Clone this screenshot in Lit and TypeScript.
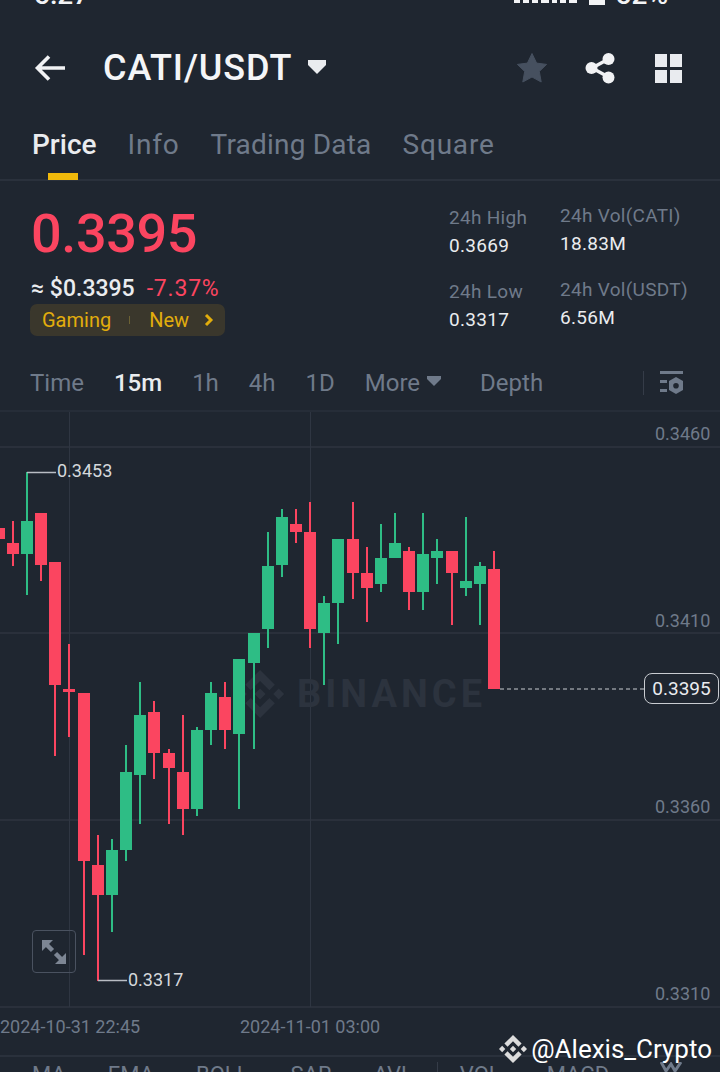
import { LitElement, css, html, svg } from 'lit';
import { customElement } from 'lit/decorators.js';

// x center, wick top, body top, body bottom, wick bottom, up
type Candle = [number, number, number, number, number, boolean];

const CHART_TOP = 412;

const candles: Candle[] = [
  [-1, 528, 528, 539, 539, false],
  [13, 521, 543, 554, 566, false],
  [27, 472, 521, 554, 595, true],
  [41, 513, 513, 565, 581, false],
  [55, 562, 562, 685, 756, false],
  [69, 644, 689, 692, 737, false],
  [84, 693, 693, 861, 955, false],
  [98, 835, 865, 895, 981, false],
  [112, 839, 850, 895, 932, true],
  [126, 745, 772, 850, 861, true],
  [140, 682, 715, 775, 824, true],
  [154, 701, 712, 753, 779, false],
  [169, 749, 753, 768, 824, false],
  [183, 715, 772, 809, 835, false],
  [197, 727, 730, 809, 816, true],
  [211, 682, 693, 730, 745, true],
  [225, 682, 697, 730, 749, false],
  [239, 659, 659, 734, 809, true],
  [254, 633, 633, 663, 749, true],
  [268, 532, 566, 629, 648, true],
  [282, 509, 517, 565, 577, true],
  [296, 509, 524, 532, 543, false],
  [310, 502, 532, 629, 648, false],
  [324, 596, 603, 633, 685, true],
  [338, 539, 539, 603, 644, true],
  [353, 502, 539, 573, 599, false],
  [367, 547, 573, 588, 622, false],
  [381, 524, 558, 584, 592, true],
  [395, 513, 543, 558, 558, true],
  [409, 547, 551, 592, 610, false],
  [423, 513, 554, 592, 610, true],
  [437, 539, 551, 558, 584, true],
  [452, 551, 551, 573, 625, false],
  [466, 517, 581, 588, 596, true],
  [480, 562, 566, 584, 625, true],
  [494, 551, 569, 689, 689, false],
];

const gridY = [447, 633, 820, 1007];
const gridX = [69.5, 310.5];
const axis: [string, number][] = [
  ['0.3460', 434],
  ['0.3410', 621],
  ['0.3360', 807],
  ['0.3310', 994],
];

const LOGO =
  'M38.73 53.2l24.59-24.58 24.6 24.6 14.3-14.31L63.32 0 24.42 38.9zM0 63.31l14.3-14.31 14.31 14.31-14.31 14.3zM38.73 73.41l24.59 24.59 24.6-24.6 14.31 14.29-38.9 38.91-38.91-38.88-.02-.02zM98 63.31l14.3-14.31 14.31 14.3-14.31 14.32zM77.83 63.3L63.32 48.78 52.59 59.51l-1.24 1.23-2.54 2.54 14.51 14.5 14.51-14.47z';

const y = (v: number) => v - CHART_TOP;

@customElement('app-root')
export class AppRoot extends LitElement {
  static styles = css`
    :host {
      display: block;
      width: 720px;
      height: 1072px;
      overflow: hidden;
      position: relative;
      background: #1f2630;
      color: #eaecef;
      font-family: 'Roboto', 'Noto Sans', sans-serif;
    }

    .status {
      height: 5px;
      overflow: hidden;
      display: flex;
      justify-content: space-between;
      padding: 0 52px 0 34px;
      font-size: 28px;
      font-weight: 500;
      line-height: 5px;
      color: #f2f3f5;
    }

    .status-text {
      transform: translateY(-8px);
    }

    .status-right {
      display: flex;
      gap: 10px;
    }

    .status-icons {
      display: block;
    }

    .header {
      height: 64px;
      margin-top: 31px;
      padding: 0 36px 0 34px;
      display: flex;
      align-items: center;
    }

    .back {
      width: 32px;
      height: 32px;
      margin-right: 37px;
    }

    .pair {
      font-size: 36px;
      font-weight: 500;
      letter-spacing: 0.9px;
      color: #f4f5f7;
    }

    .caret {
      width: 20px;
      height: 14px;
      margin: 0 0 3px 15px;
    }

    .actions {
      margin-left: auto;
      display: flex;
      align-items: center;
      gap: 36px;
    }

    .actions svg {
      width: 32px;
      height: 32px;
      display: block;
    }

    .tabs {
      height: 81px;
      box-sizing: border-box;
      border-bottom: 2px solid #2a313c;
      padding: 0 32px;
      display: flex;
      gap: 31px;
      font-size: 28px;
      letter-spacing: 0.2px;
      color: #6f7a8a;
      line-height: 89px;
    }

    .tab.active {
      position: relative;
      color: #eaecef;
      font-weight: 500;
      letter-spacing: 0;
    }

    .tab.active::after {
      content: '';
      position: absolute;
      left: 16px;
      bottom: -1px;
      width: 30px;
      height: 7px;
      background: #f0b90b;
    }

    .tab.wide {
      letter-spacing: 0.8px;
    }

    .summary {
      height: 175px;
      display: flex;
      padding: 0 32px 0 31px;
    }

    .left {
      width: 418px;
    }

    .price {
      font-size: 54px;
      font-weight: 500;
      letter-spacing: -0.4px;
      line-height: 60px;
      color: #fb4560;
      margin-top: 23px;
    }

    .sub {
      font-size: 23px;
      line-height: 30px;
      margin-top: 10px;
      display: flex;
      gap: 12px;
    }

    .sub b {
      font-weight: 500;
    }

    .change {
      color: #fb4560;
      letter-spacing: 0.8px;
    }

    .tags {
      width: 195px;
      height: 32px;
      margin-left: -1px;
      box-sizing: border-box;
      border-radius: 7px;
      background: #3a372c;
      color: #e2ad0c;
      font-size: 20px;
      display: flex;
      align-items: center;
      padding: 0 11px 0 12px;
    }

    .tag-sep {
      width: 1px;
      height: 8px;
      background: #6c6234;
      margin: 0 19px 0 18px;
    }

    .tag-arrow {
      width: 10px;
      height: 12px;
      margin-left: 15px;
    }

    .stats {
      display: grid;
      grid-template-columns: 111px auto;
      grid-auto-rows: 74px;
      padding-top: 24px;
      font-size: 19px;
      letter-spacing: 0.3px;
    }

    .stat span {
      display: block;
      color: #6f7a8a;
      line-height: 26px;
    }

    .stat strong {
      display: block;
      font-weight: 400;
      color: #eaecef;
      font-size: 19px;
      line-height: 30px;
    }

    .stat.up {
      margin-top: -2px;
    }

    .times {
      height: 56px;
      box-sizing: border-box;
      border-bottom: 2px solid #262d38;
      padding: 0 36px 0 30px;
      display: flex;
      align-items: center;
      font-size: 24px;
      color: #6f7a8a;
    }

    .times span {
      margin-right: 30px;
    }

    .times .active {
      color: #eaecef;
      font-weight: 500;
    }

    .times .more {
      margin-right: 7px;
    }

    .more-caret {
      width: 14px;
      height: 10px;
      margin: 0 39px 4px 0;
    }

    .times .depth {
      margin-right: 0;
    }

    .times-sep {
      width: 1px;
      height: 24px;
      background: #353c48;
      margin-left: auto;
      margin-right: 16px;
    }

    .settings {
      width: 24px;
      height: 24px;
    }

    .chart {
      position: relative;
      height: 643px;
      border-bottom: 2px solid #2a313c;
    }

    .chart svg {
      display: block;
    }

    .chart text {
      font-family: 'Roboto', 'Noto Sans', sans-serif;
    }

    .current {
      position: absolute;
      right: 1px;
      top: 261px;
      width: 75px;
      height: 31px;
      box-sizing: border-box;
      border: 1.5px solid #c9ccd1;
      border-radius: 8px;
      background: #1f2630;
      color: #eaecef;
      font-size: 19px;
      line-height: 29px;
      text-align: center;
    }

    .expand {
      position: absolute;
      left: 32px;
      top: 518px;
      width: 44px;
      height: 43px;
      box-sizing: border-box;
      border: 1.5px solid #4a5260;
      border-radius: 4px;
      display: flex;
      align-items: center;
      justify-content: center;
    }

    .indicators {
      display: flex;
      padding: 5px 38px 0 32px;
      font-size: 22px;
      color: #6f7a8a;
    }

    .ind-group {
      display: flex;
      gap: 42px;
    }

    .ind-group.right {
      gap: 46px;
    }

    .ind-sep {
      width: 1px;
      height: 20px;
      background: #353c48;
      margin: 0 22px 0 24px;
    }

    .ind-more {
      display: block;
      margin-left: auto;
    }

    .watermark {
      position: absolute;
      right: 8px;
      top: 1034px;
      display: flex;
      align-items: center;
      gap: 4px;
      font-size: 26px;
      color: #fff;
    }

    .watermark svg {
      color: #dcdcdc;
    }
  `;

  render() {
    return html`
      <div class="status">
        <div class="status-text">5:27</div>
        <div class="status-right">
          <svg class="status-icons" width="92" height="5" viewBox="0 0 92 5" fill="#f2f3f5">
            <rect x="0" y="0" width="6" height="3" />
            <rect x="9" y="0" width="6" height="3" />
            <rect x="18" y="0" width="6" height="3" />
            <rect x="27" y="0" width="8" height="3" />
            <rect x="38" y="0" width="5" height="3" />
            <rect x="46" y="0" width="6" height="3" />
            <rect x="55" y="0" width="8" height="3" />
            <rect x="75" y="0" width="16" height="5" />
          </svg>
          <div class="status-text">52%</div>
        </div>
      </div>

      <div class="header">
        <svg class="back" viewBox="0 0 32 32" fill="none" stroke="#f1f2f4" stroke-width="3.6">
          <path d="M31 16H3M15 4.5 3.5 16 15 27.5" />
        </svg>
        <div class="pair">CATI/USDT</div>
        <svg class="caret" viewBox="0 0 20 14"><path d="M1 0h18v5L10 14 1 5z" fill="#eaecef" /></svg>
        <div class="actions">
          <svg viewBox="0 0 32 32">
            <path
              d="M16 1.5l4.6 9.6 10 1.3-7.3 7 1.9 10.6L16 25l-9.2 5 1.9-10.6-7.3-7 10-1.3z"
              fill="#46505f"
              stroke="#46505f"
              stroke-linejoin="round"
            />
          </svg>
          <svg viewBox="0 0 32 32">
            <path d="M24.5 7 8 16l16.5 9" fill="none" stroke="#f1f2f4" stroke-width="3.4" />
            <circle cx="24.5" cy="7" r="6" fill="#f1f2f4" />
            <circle cx="7.5" cy="16" r="6" fill="#f1f2f4" />
            <circle cx="24.5" cy="25.5" r="6" fill="#f1f2f4" />
          </svg>
          <svg viewBox="0 0 32 32" fill="#e9ebef">
            <rect x="3" y="2" width="12" height="13" />
            <rect x="18" y="2" width="12" height="13" />
            <rect x="3" y="18" width="12" height="13" />
            <rect x="18" y="18" width="12" height="13" />
          </svg>
        </div>
      </div>

      <div class="tabs">
        <div class="tab active">Price</div>
        <div class="tab wide">Info</div>
        <div class="tab">Trading Data</div>
        <div class="tab wide">Square</div>
      </div>

      <div class="summary">
        <div class="left">
          <div class="price">0.3395</div>
          <div class="sub"><b>≈ $0.3395</b><span class="change">-7.37%</span></div>
          <div class="tags">
            <span>Gaming</span>
            <span class="tag-sep"></span>
            <span>New</span>
            <svg class="tag-arrow" viewBox="0 0 10 12" fill="none" stroke="#e2ad0c" stroke-width="3">
              <path d="M2 1l5 5-5 5" />
            </svg>
          </div>
        </div>
        <div class="stats">
          <div class="stat"><span>24h High</span><strong>0.3669</strong></div>
          <div class="stat up"><span>24h Vol(CATI)</span><strong>18.83M</strong></div>
          <div class="stat"><span>24h Low</span><strong>0.3317</strong></div>
          <div class="stat up"><span>24h Vol(USDT)</span><strong>6.56M</strong></div>
        </div>
      </div>

      <div class="times">
        <span>Time</span>
        <span class="active">15m</span>
        <span>1h</span>
        <span>4h</span>
        <span>1D</span>
        <span class="more">More</span>
        <svg class="more-caret" viewBox="0 0 14 10"><path d="M0 0h14v3L7 10 0 3z" fill="#6f7a8a" /></svg>
        <span class="depth">Depth</span>
        <div class="times-sep"></div>
        <svg class="settings" viewBox="0 0 24 24" fill="#6f7a8a">
          <rect x="0" y="0" width="23" height="3" />
          <rect x="0" y="9" width="7" height="3" />
          <rect x="0" y="18" width="7" height="3" />
          <path
            fill-rule="evenodd"
            d="M16 6l7 4v9l-7 4-7-4v-9zm0 6a2.800 2.800 0 1 0 0 5.600 2.800 2.800 0 0 0 0-5.600z"
          />
        </svg>
      </div>

      <div class="chart">
        ${this.renderChart()}
        <div class="current">0.3395</div>
        <div class="expand">
          <svg width="26" height="26" viewBox="0 0 26 26" fill="#7d8694" stroke="none">
            <path d="M1 1h11L1 12z" />
            <path d="M25 25H14l11-11z" />
            <path d="M5 5l6.500 6.500M21 21l-6.500-6.500" stroke="#7d8694" stroke-width="4.500" />
          </svg>
        </div>
      </div>

      <div class="indicators">
        <div class="ind-group">
          <span>MA</span><span>EMA</span><span>BOLL</span><span>SAR</span><span>AVL</span>
        </div>
        <div class="ind-sep"></div>
        <div class="ind-group right">
          <span>VOL</span><span>MACD</span>
        </div>
        <svg class="ind-more" width="22" height="14" viewBox="0 0 22 14" fill="none" stroke="#6f7a8a" stroke-width="3">
          <path d="M1 0l5 9 5-7 4 7 6-9" />
        </svg>
      </div>

      <div class="watermark">
        <svg width="28" height="28" viewBox="0 0 126.61 126.61" fill="currentColor">
          <path d=${LOGO} />
        </svg>
        <span>@Alexis_Crypto</span>
      </div>
    `;
  }

  private renderChart() {
    return html`<svg width="720" height="643" viewBox="0 0 720 643">
      ${gridY.map(
        (g) => svg`<line x1="0" x2="720" y1=${y(g)} y2=${y(g)} stroke="#2a303b" stroke-width="2" />`
      )}
      ${gridX.map(
        (g) => svg`<line x1=${g} x2=${g} y1="0" y2="595" stroke="#2f3642" stroke-width="1" />`
      )}
      <text
        x="297"
        y="295"
        font-size="38"
        font-weight="700"
        letter-spacing="4"
        fill="#2c333e"
      >BINANCE</text>
      <g fill="#2c333e" transform="translate(236 258) scale(0.38)">
        <path d=${LOGO} />
      </g>
      ${candles.map(([cx, top, a, b, bottom, up]) => {
        const c = up ? '#2ebd85' : '#fb4560';
        return svg`
          <rect x=${cx - 1} y=${y(top)} width="2" height=${bottom - top} fill=${c} />
          <rect x=${cx - 6} y=${y(a)} width="12" height=${Math.max(b - a, 2)} fill=${c} />
        `;
      })}
      <path d="M27 60.500H56" stroke="#b9bdc4" stroke-width="1.500" fill="none" />
      <text x="57" y="65" font-size="18" fill="#d5d8dc">0.3453</text>
      <path d="M98 568.500H127" stroke="#b9bdc4" stroke-width="1.500" fill="none" />
      <text x="128" y="574" font-size="18" fill="#d5d8dc">0.3317</text>
      <path d="M500 277H644" stroke="#c9ccd1" stroke-width="1" stroke-dasharray="4 3" fill="none" />
      ${axis.map(
        ([t, v]) => svg`<text x="655" y=${y(v) + 6} font-size="18" fill="#6f7a8a">${t}</text>`
      )}
      <text x="0" y="621" font-size="18" fill="#6f7a8a">2024-10-31 22:45</text>
      <text x="240" y="621" font-size="18" fill="#6f7a8a">2024-11-01 03:00</text>
    </svg>`;
  }
}
